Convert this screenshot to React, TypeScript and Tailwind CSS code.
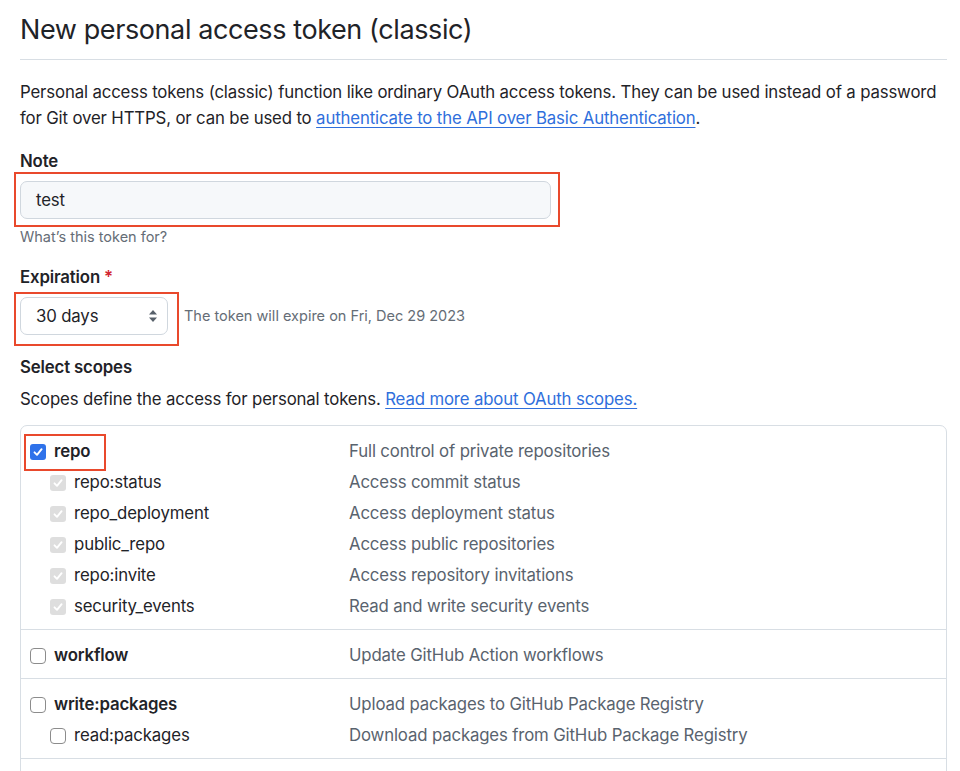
import React from "react";

const font = { fontFamily: "Inter, 'Noto Sans', sans-serif" };

function Check({ state }: { state: "on" | "off" | "disabled" }) {
  if (state === "on") {
    return (
      <span className="flex h-[16px] w-[16px] shrink-0 items-center justify-center rounded-[3px] bg-[#2f72ea]">
        <svg width="12" height="12" viewBox="0 0 12 12">
          <path d="M2.5 6.3 L5 8.8 L9.6 3.2" fill="none" stroke="#fff" strokeWidth="1.9" strokeLinecap="round" strokeLinejoin="round" />
        </svg>
      </span>
    );
  }
  if (state === "disabled") {
    return (
      <span className="flex h-[16px] w-[16px] shrink-0 items-center justify-center rounded-[3px] bg-[#dedede]">
        <svg width="12" height="12" viewBox="0 0 12 12">
          <path d="M2.5 6.3 L5 8.8 L9.6 3.2" fill="none" stroke="#fff" strokeWidth="1.9" strokeLinecap="round" strokeLinejoin="round" />
        </svg>
      </span>
    );
  }
  return <span className="block h-[16px] w-[16px] shrink-0 rounded-[4px] border border-[#8c8c8c] bg-white" />;
}

type Row = { name: string; desc: string; state: "on" | "off" | "disabled"; sub?: boolean; mark?: boolean };

const groups: Row[][] = [
  [
    { name: "repo", desc: "Full control of private repositories", state: "on", mark: true },
    { name: "repo:status", desc: "Access commit status", state: "disabled", sub: true },
    { name: "repo_deployment", desc: "Access deployment status", state: "disabled", sub: true },
    { name: "public_repo", desc: "Access public repositories", state: "disabled", sub: true },
    { name: "repo:invite", desc: "Access repository invitations", state: "disabled", sub: true },
    { name: "security_events", desc: "Read and write security events", state: "disabled", sub: true },
  ],
  [{ name: "workflow", desc: "Update GitHub Action workflows", state: "off" }],
  [
    { name: "write:packages", desc: "Upload packages to GitHub Package Registry", state: "off" },
    { name: "read:packages", desc: "Download packages from GitHub Package Registry", state: "off", sub: true },
  ],
  [{ name: "delete:packages", desc: "Delete packages from GitHub Package Registry", state: "off" }],
];

export default function App() {
  return (
    <div className="h-[771px] w-[960px] overflow-hidden bg-white text-[#1f2328]" style={font}>
      <div className="ml-[20px] w-[927px] tracking-[-0.15px]">
        <h2 className="border-b border-[#d8dee4] pt-[11px] pb-[10px] text-[27px] leading-[38px] font-normal tracking-[-0.4px]">
          New personal access token (classic)
        </h2>

        <p className="mt-[19px] text-[16.8px] leading-[26px]">
          Personal access tokens (classic) function like ordinary OAuth access tokens. They can be used instead of a password for Git over HTTPS, or can be used to{" "}
          <a className="text-[#2f6fdc] underline underline-offset-[3px]">authenticate to the API over Basic Authentication</a>.
        </p>

        <div className="mt-[19px] text-[16.8px] leading-[22px] font-semibold">Note</div>
        <div className="-ml-[6px] w-[546px] border-2 border-[#e9492c] pt-[7px] pb-[6px] pl-[4px] pr-[7px]">
          <div className="flex h-[38px] items-center rounded-[7px] border border-[#d0d7de] bg-[#f6f8fa] pl-[15px] pt-[1px] text-[16.8px]">
            test
          </div>
        </div>
        <div className="text-[14.5px] leading-[20px] text-[#656d76] tracking-normal">What’s this token for?</div>

        <div className="mt-[19px] text-[16.8px] leading-[22px] font-semibold">
          Expiration <span className="text-[#d1242f]">*</span>
        </div>
        <div className="mt-[4px] flex items-start">
          <div className="-ml-[6px] h-[54px] w-[165px] border-2 border-[#e9492c] pt-[3px] pl-[4px] pr-[9px]">
            <div className="flex h-[38px] items-center justify-between rounded-[7px] border border-[#d0d7de] bg-white pl-[15px] pr-[9px] text-[16.8px]">
              <span className="pt-[1px]">30 days</span>
              <svg width="10" height="14" viewBox="0 0 10 14">
                <path d="M5 1 L9 5.5 H1 Z" fill="#57606a" />
                <path d="M5 13 L9 8.5 H1 Z" fill="#57606a" />
              </svg>
            </div>
          </div>
          <div className="ml-[5px] mt-[14px] text-[14.5px] leading-[20px] text-[#656d76] tracking-normal">
            The token will expire on Fri, Dec 29 2023
          </div>
        </div>

        <div className="mt-[10px] text-[16.8px] leading-[22px] font-semibold">Select scopes</div>
        <p className="mt-[8px] text-[16.8px] leading-[26px]">
          Scopes define the access for personal tokens.{" "}
          <a className="text-[#2f6fdc] underline underline-offset-[3px]">Read more about OAuth scopes.</a>
        </p>

        <div className="mt-[13px] rounded-[7px] border border-[#d8dee4]">
          {groups.map((g, gi) => (
            <div key={gi} className={`pt-[10px] pb-[7px] ${gi > 0 ? "border-t border-[#d8dee4]" : ""}`}>
              {g.map((r) => (
                <div key={r.name} className="relative flex h-[31px] items-center text-[16.8px]">
                  <div className={`flex w-[328px] items-center gap-[8px] ${r.sub ? "pl-[29px]" : "pl-[9px]"}`}>
                    <Check state={r.state} />
                    <span className={r.sub ? "" : "font-semibold"}>{r.name}</span>
                  </div>
                  <div className="text-[#59636e]">{r.desc}</div>
                  {r.mark && (
                    <div className="pointer-events-none absolute left-[3px] top-[-2px] h-[37px] w-[82px] border-2 border-[#e9492c]" />
                  )}
                </div>
              ))}
            </div>
          ))}
        </div>
      </div>
    </div>
  );
}
